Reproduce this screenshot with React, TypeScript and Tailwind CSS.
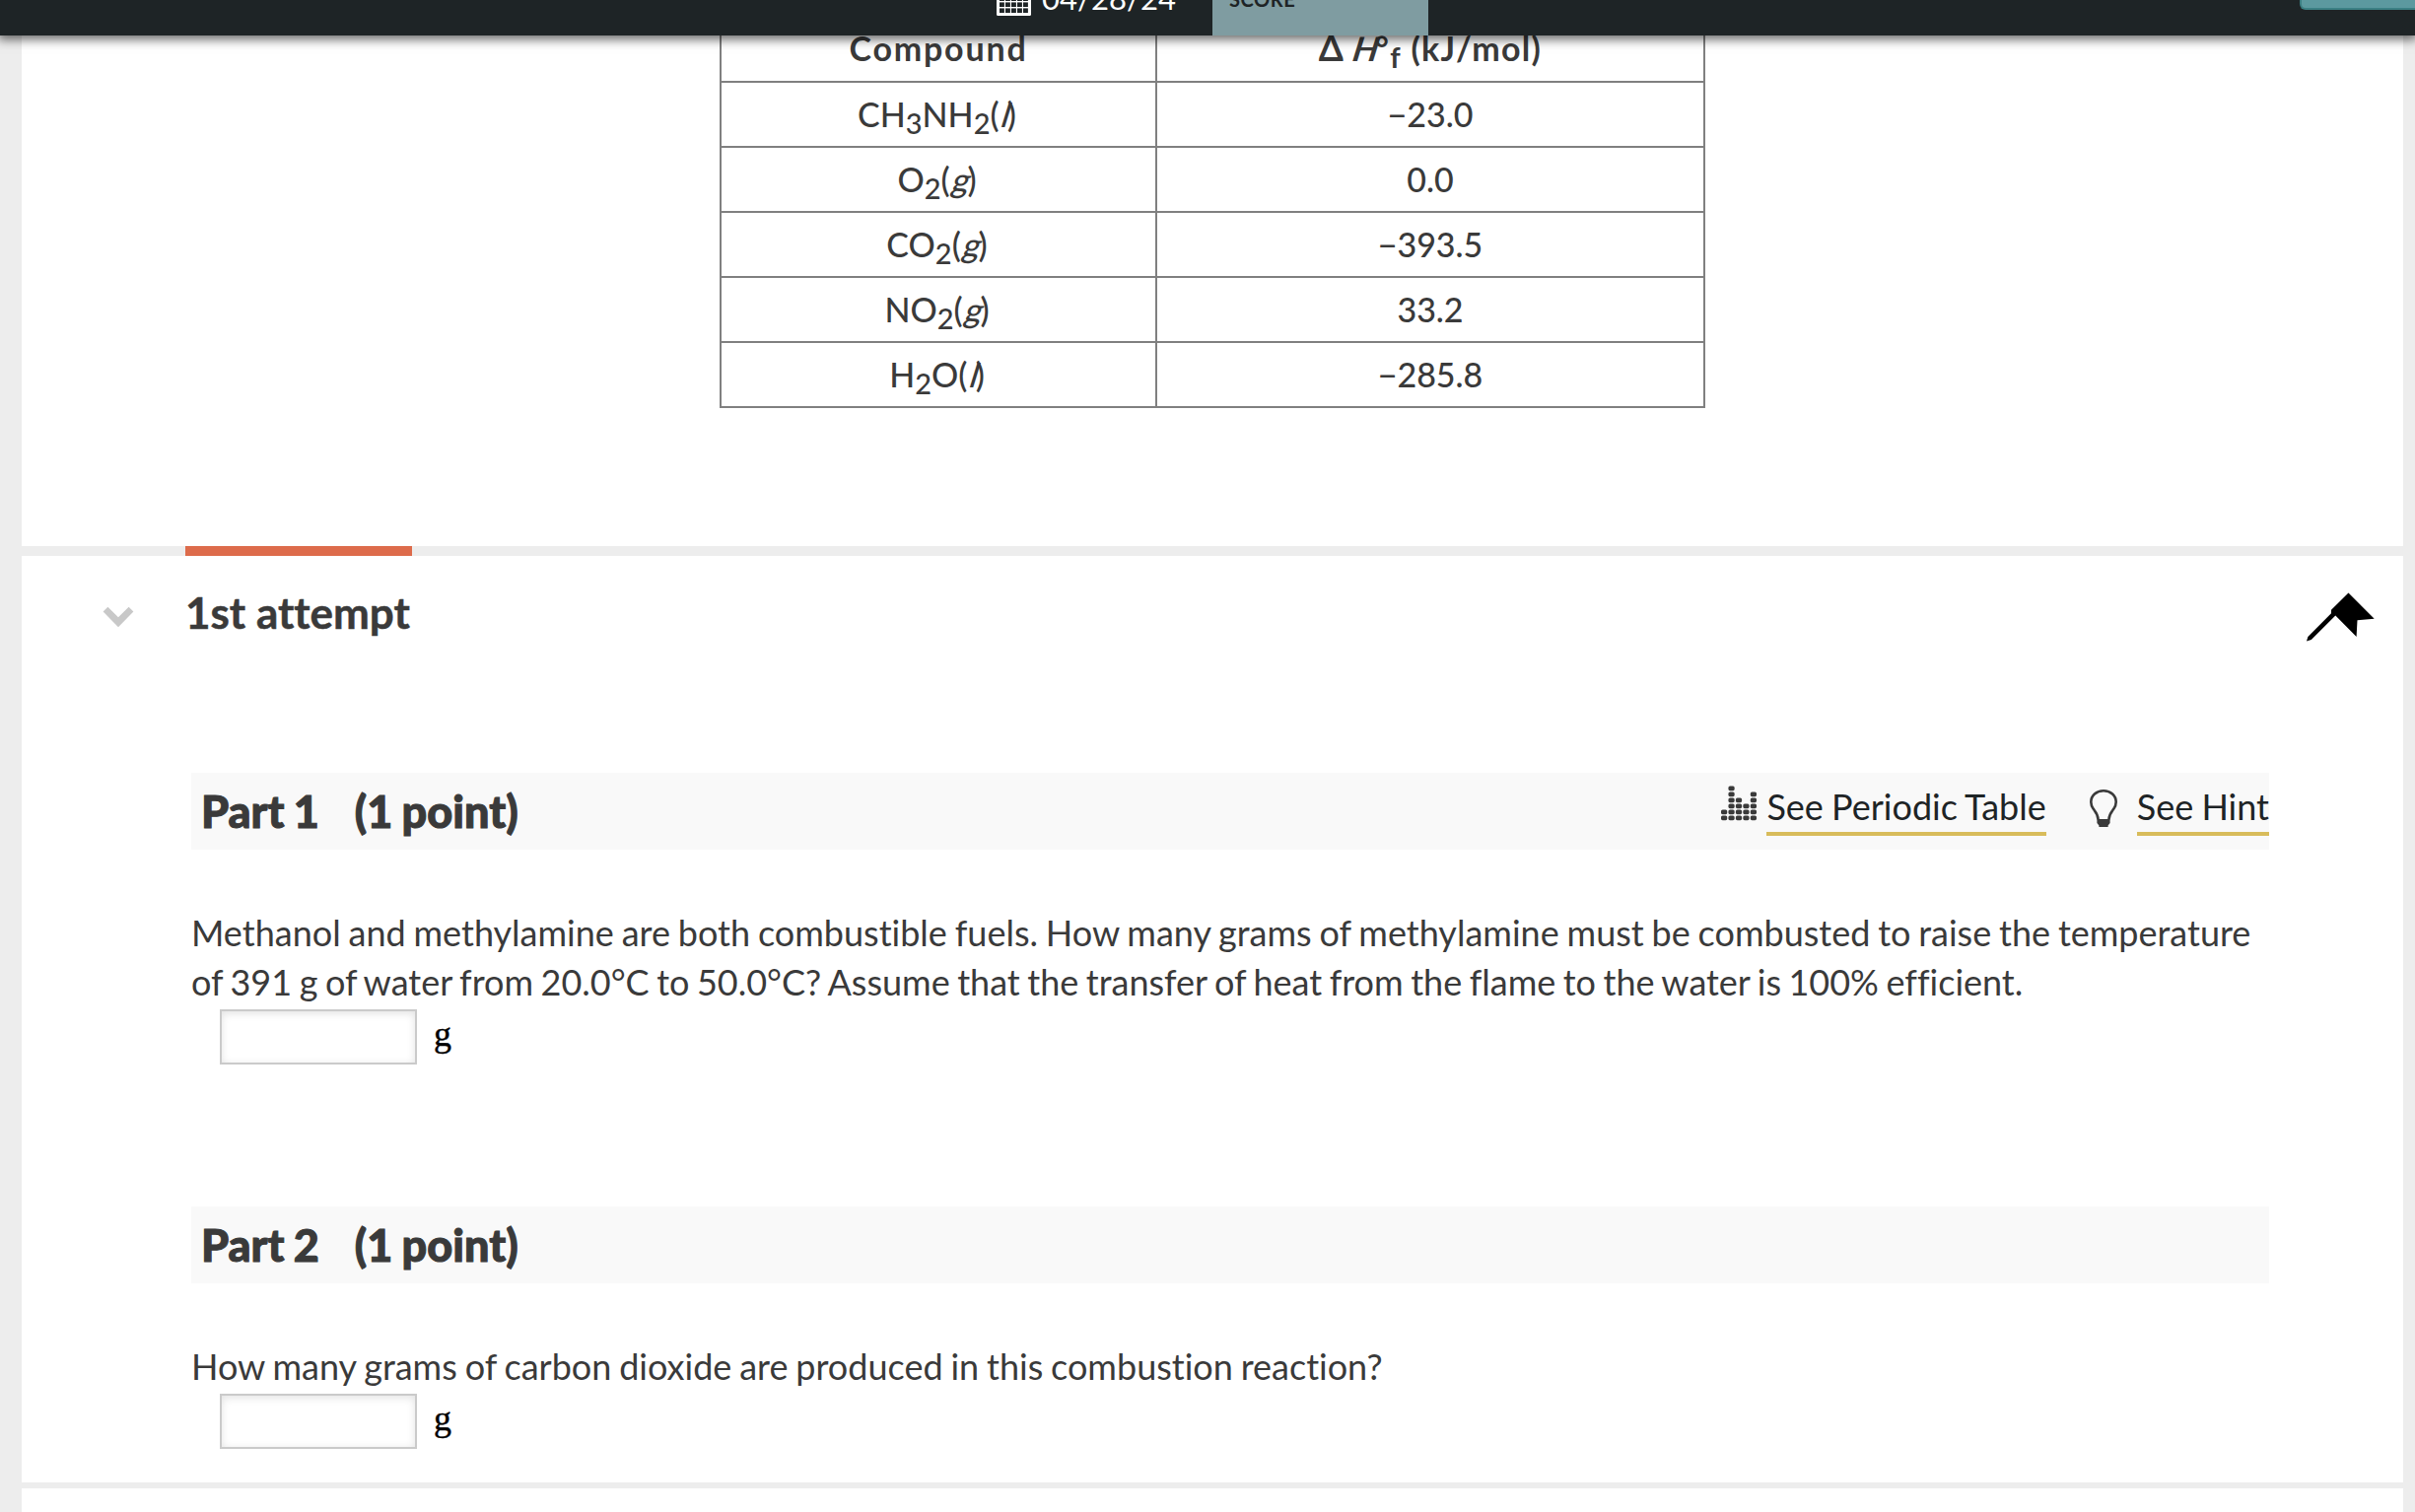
import type { ReactNode } from "react";

const compounds: { name: ReactNode; value: string }[] = [
  { name: <>CH<Sub>3</Sub>NH<Sub>2</Sub>(<Oblique>l</Oblique>)</>, value: "−23.0" },
  { name: <>O<Sub>2</Sub>(<Oblique>g</Oblique>)</>, value: "0.0" },
  { name: <>CO<Sub>2</Sub>(<Oblique>g</Oblique>)</>, value: "−393.5" },
  { name: <>NO<Sub>2</Sub>(<Oblique>g</Oblique>)</>, value: "33.2" },
  { name: <>H<Sub>2</Sub>O(<Oblique>l</Oblique>)</>, value: "−285.8" },
];

function Sub({ children }: { children: ReactNode }) {
  return <span className="relative top-[7px] text-[29px] leading-none">{children}</span>;
}

// skewed upright letters, the italic face has a different g
function Oblique({ children }: { children: ReactNode }) {
  return <span className="inline-block origin-[0_78%] -skew-x-[17deg]">{children}</span>;
}

function CalendarIcon() {
  return (
    <svg width="35" height="36" viewBox="0 0 35 36" className="shrink-0">
      <rect x="0" y="3" width="35" height="33" rx="1.5" fill="#fff" />
      {[0, 1, 2, 3].map((r) =>
        [0, 1, 2, 3, 4].map((c) => (
          <rect key={`${r}-${c}`} x={3 + c * 6} y={10.4 + r * 6} width="4.9" height="4.6" fill="#1e2426" />
        ))
      )}
    </svg>
  );
}

// heights of the dotted columns, in dots
const dotColumns = [2, 6, 4, 3, 5];

function PeriodicIcon() {
  return (
    <svg width="36" height="36" viewBox="0 0 36 36">
      {dotColumns.map((n, c) =>
        Array.from({ length: n }, (_, r) => (
          <rect key={`${c}-${r}`} x={c * 7.45} y={30.4 - r * 6} width="6.2" height="4.8" rx="1.6" fill="#3a3a3a" />
        ))
      )}
    </svg>
  );
}

function BulbIcon() {
  return (
    <svg width="28" height="38" viewBox="0 0 28 38" fill="none">
      <path
        d="M8.6 30.5C8.4 25 5.8 22.6 3.6 19.6C2 17.2 1.3 15.4 1.3 12.7C1.3 6 6.8 1.3 14 1.3S26.7 6 26.7 12.7C26.7 15.4 26 17.2 24.4 19.6C22.2 22.6 19.6 25 19.4 30.5"
        stroke="#3a3a3a"
        strokeWidth="2.6"
      />
      <path d="M7.4 30H20.6V34L18.6 36.4V38H9.4V36.4L7.4 34Z" fill="#3a3a3a" />
    </svg>
  );
}

function PinIcon() {
  return (
    <svg width="70" height="50" viewBox="0 0 70 50">
      <path d="M42.5 0.5L68.7 26.8L51.5 28.2L50.6 45L29.3 23.6L4.8 48L0 49.6L1.4 45L25 21.2V17.8Z" fill="#000" />
    </svg>
  );
}

function Part({ title, tools, children }: { title: string; tools?: ReactNode; children: ReactNode }) {
  return (
    <section>
      <div className="flex h-[78px] items-start justify-between bg-[#f9f9f9] pl-[10px]">
        <h3 className="flex gap-[36px] pt-[12px] text-[45px] leading-[54px] font-black [-webkit-text-stroke:1px_#3a3a3a] [word-spacing:-1.5px]">
          <span>{title}</span>
          <span>(1 point)</span>
        </h3>
        {tools}
      </div>
      <div className="pt-[59px] text-[36px] leading-[50px] whitespace-nowrap [word-spacing:-1.35px]">{children}</div>
      <div className="mt-[3px] flex items-start pl-[29px]">
        <input className="h-[56px] w-[200px] border-2 border-[#cacaca] bg-white shadow-[inset_0_2px_8px_rgba(0,0,0,0.12)]" />
        <span className="pt-[4px] pl-[17px] font-['Liberation_Serif',serif] text-[36px] leading-[42px] text-black [-webkit-text-stroke:0.4px_#000]">
          g
        </span>
      </div>
    </section>
  );
}

export default function App() {
  return (
    <div className="relative h-[1534px] w-[2450px] overflow-hidden bg-[#ededed] pr-[12px] pl-[22px] font-['Lato',sans-serif] text-[#3a3a3a] [font-variant-ligatures:none]">
      <header className="absolute inset-x-0 top-0 z-10 flex h-[36px] bg-[#1e2426] shadow-[0_2px_10px_2px_rgba(0,0,0,0.6)]">
        <div className="flex h-[36px] w-[1230px] items-start pl-[1011px]">
          <div className="-mt-[20px] flex">
            <CalendarIcon />
            <span className="pl-[11px] text-[31px] leading-[36px] whitespace-nowrap text-white">04/28/24</span>
          </div>
        </div>
        <div className="w-[219px] bg-[#7f9ca1] pl-[17px]">
          <div className="-mt-[14px] text-[20px] leading-[26px] font-bold tracking-[0.6px] text-[#1e2426]">SCORE</div>
        </div>
        <div className="ml-auto -mt-[10px] h-[20px] w-[117px] rounded-bl-[6px] border-b-2 border-l-2 border-[#3b7f83] bg-[#5c999f]" />
      </header>

      <main>
        <div className="h-[554px] bg-white pt-[16px] pl-[708px]">
          <table className="w-[1000px] table-fixed border-collapse text-center text-[34px] leading-[40px] font-medium">
            <thead>
              <tr className="h-[66px]">
                <th className="w-[442px] border-2 border-[#808080] p-0 pb-[2px] font-bold tracking-[1.8px]">Compound</th>
                <th className="border-2 border-[#808080] p-0 pb-[2px] font-bold tracking-[1.3px]">
                  <span className="text-[36px] leading-none">Δ</span>
                  <span className="ml-[6px]">
                    <Oblique>H</Oblique>
                  </span>
                  <span className="-ml-[3px]">°</span>
                  <Sub>f</Sub> (kJ/mol)
                </th>
              </tr>
            </thead>
            <tbody>
              {compounds.map((c) => (
                <tr key={c.value} className="h-[66px]">
                  <td className="border-2 border-[#808080] p-0 pr-[3px] pb-px">{c.name}</td>
                  <td className="border-2 border-[#808080] p-0">{c.value}</td>
                </tr>
              ))}
            </tbody>
          </table>
        </div>

        <div className="h-[10px] pl-[166px]">
          <div className="h-[10px] w-[230px] bg-[#dd6b4b]" />
        </div>

        <div className="h-[940px] bg-white">
          <div className="flex h-[220px] items-start">
            <svg width="32" height="22" viewBox="0 0 32 22" className="mt-[51px] ml-[82px]">
              <path d="M0.6 5.6L5.4 0.8L16 11.2L26.6 0.8L31.4 5.6L16 21.2Z" fill="#c8c8c8" />
            </svg>
            <h2 className="ml-[52px] pt-[30px] text-[44px] leading-[54px] font-bold [-webkit-text-stroke:0.5px_#3a3a3a]">1st attempt</h2>
            <div className="mt-[37px] mr-[28px] ml-auto">
              <PinIcon />
            </div>
          </div>

          <div className="w-[2280px] pl-[172px]">
            <Part
              title="Part 1"
              tools={
                <div className="flex items-start text-[36px] leading-[48px] text-[#1e2426] [word-spacing:-1px]">
                  <div className="mt-[13px]">
                    <PeriodicIcon />
                  </div>
                  <a className="mt-[10px] ml-[10px] border-b-4 border-[#d8bc5b] pb-[2px] whitespace-nowrap">See Periodic Table</a>
                  <div className="mt-[17px] ml-[44px]">
                    <BulbIcon />
                  </div>
                  <a className="mt-[10px] ml-[20px] border-b-4 border-[#d8bc5b] pb-[2px] whitespace-nowrap">See Hint</a>
                </div>
              }
            >
              Methanol and methylamine are both combustible fuels. How many grams of methylamine must be combusted to raise the temperature
              <br />
              <span className="[word-spacing:-1.7px]">
                of 391 g of water from 20.0°C to 50.0°C? Assume that the transfer of heat from the flame to the water is 100% efficient.
              </span>
            </Part>
            <div className="h-[144px]" />
            <Part title="Part 2">How many grams of carbon dioxide are produced in this combustion reaction?</Part>
          </div>
        </div>

        <div className="mt-[6px] h-[24px] bg-white" />
      </main>
    </div>
  );
}
